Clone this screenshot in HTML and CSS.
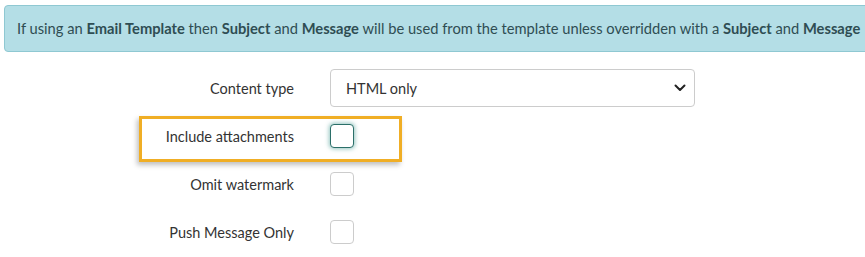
FILE: index.html
```html
<!DOCTYPE html>
<html>
<head>
<meta charset="utf-8">
<link rel="stylesheet" href="styles.css">
</head>
<body>
<div class="page">
  <div class="alert">If using an <b>Email Template</b> then <b>Subject</b> and <b>Message</b> will be used from the template unless overridden with a <b>Subject</b> and <b>Message</b></div>
  <div class="form">
    <div class="row">
      <label class="label">Content type</label>
      <div class="select">
        <span>HTML only</span>
        <svg class="chev" width="12" height="8" viewBox="0 0 12 8"><path d="M1.5 1.5 L6 6 L10.5 1.5" fill="none" stroke="#222" stroke-width="2" stroke-linecap="round" stroke-linejoin="round"/></svg>
      </div>
    </div>
    <div class="row">
      <label class="label">Include attachments</label>
      <div class="check focus"></div>
    </div>
    <div class="row">
      <label class="label">Omit watermark</label>
      <div class="check"></div>
    </div>
    <div class="row">
      <label class="label">Push Message Only</label>
      <div class="check"></div>
    </div>
    <div class="highlight"></div>
  </div>
</div>
</body>
</html>
```
FILE: styles.css
```css
html, body {
  margin: 0;
  padding: 0;
  background: #fff;
  overflow: hidden;
}
.page {
  font-family: Lato, "Noto Sans", sans-serif;
  font-size: 14.5px;
  color: #333;
  width: 865px;
  height: 257px;
  overflow: hidden;
}
.alert {
  box-sizing: border-box;
  margin: 5px 0 0 4px;
  width: 900px;
  height: 47px;
  line-height: 45px;
  font-size: 14.7px;
  background: #b4dee6;
  border: 1px solid #8fc8d2;
  border-radius: 4px;
  color: #2f4d53;
  padding: 0 12px;
  white-space: nowrap;
}
.alert b { font-weight: 700; }
.form {
  position: relative;
  margin-top: 12px;
}
.row {
  display: grid;
  grid-template-columns: 294px 365px;
  column-gap: 36px;
  align-items: center;
  height: 48px;
}
.label {
  text-align: right;
  color: #333;
}
.select {
  box-sizing: border-box;
  height: 38px;
  border: 1px solid #ccc;
  border-radius: 4px;
  display: flex;
  align-items: center;
  justify-content: space-between;
  padding: 0 8px 0 15px;
  color: #333;
}
.check {
  box-sizing: border-box;
  width: 24px;
  height: 24px;
  border: 1px solid #ccc;
  border-radius: 4px;
  background: #fff;
}
.check.focus {
  border-color: #2b6f69;
  box-shadow: 0 0 4px 1px rgba(60, 150, 140, 0.55);
}
.highlight {
  position: absolute;
  left: 139px;
  top: 52px;
  width: 263px;
  height: 46px;
  box-sizing: border-box;
  border: 3px solid #f0ae25;
  box-shadow: -2px 3px 5px rgba(0,0,0,0.25);
}
```
